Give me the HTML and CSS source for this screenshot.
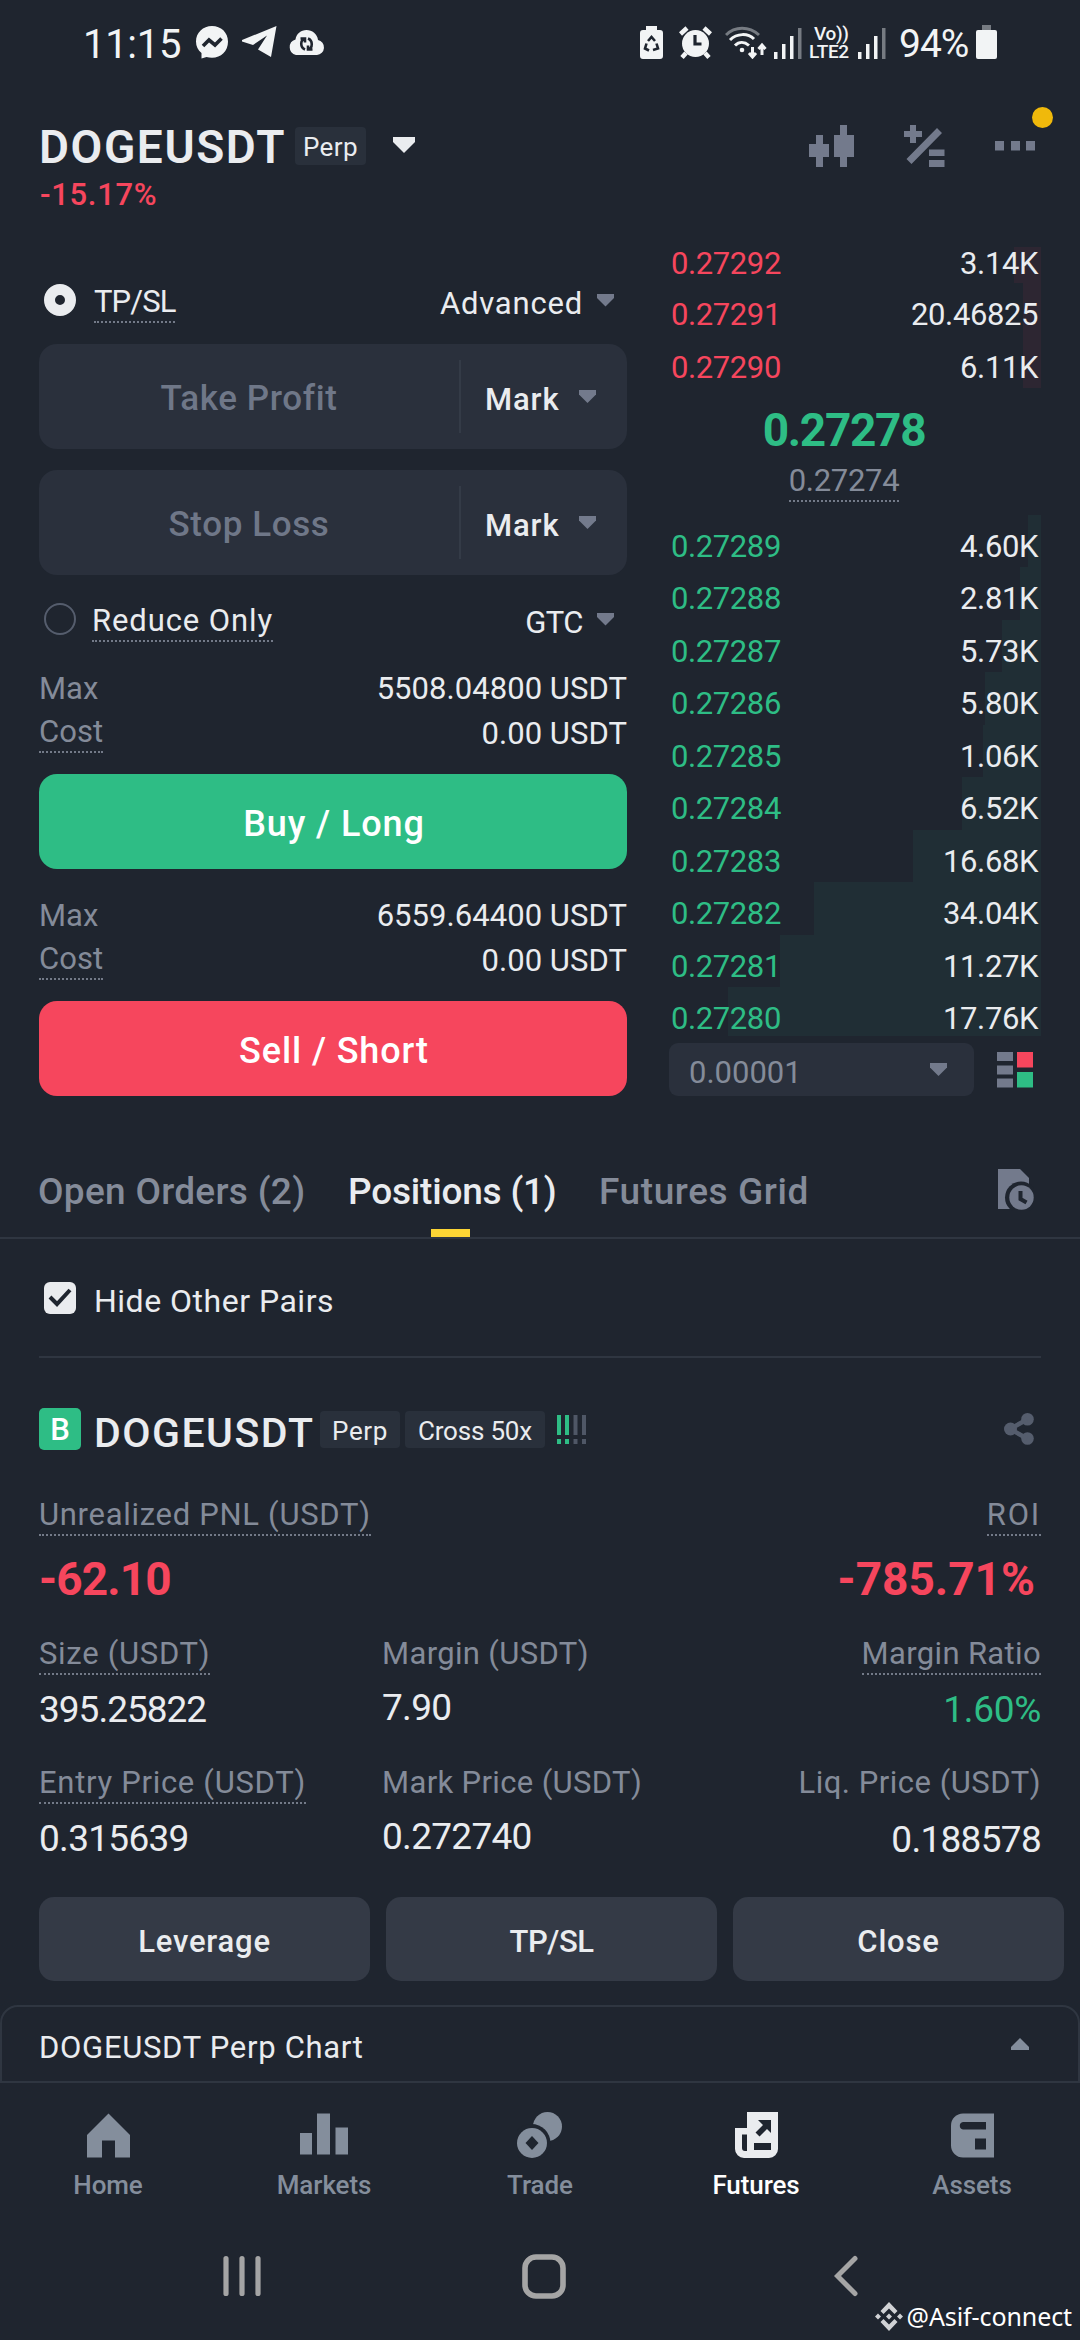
FILE: index.html
```html
<!DOCTYPE html>
<html lang="en">
<head>
    <meta charset="UTF-8">
    <meta name="viewport" content="width=device-width, initial-scale=1.0">
    <title>DOGEUSDT Perp</title>
    <link rel="stylesheet" href="styles.css">
</head>
<body>
    <div class="screen">
        <div class="status-bar">
            <div class="status-left">
                <span class="clock">11:15</span>
                <svg class="ic-messenger" width="32" height="33" viewBox="0 0 32 33">
                    <path fill="#f2f4f5" d="M16 0C7 0 0 6.600 0 15.500c0 4.700 2 8.700 5.500 11.500v5.500l5-1.500c1.700.500 3.500.700 5.500.700 9 0 16-6.700 16-16S25 0 16 0z"/>
                    <path fill="none" stroke="#1f252f" stroke-width="3.600" d="M7 20l6-6 6 5 6.500-6.500"/>
                </svg>
                <svg class="ic-telegram" width="35" height="32" viewBox="0 0 35 32">
                    <path fill="#f2f4f5" d="M34.500 0L29 31 16 23.500 25 9.500 11 19 0 15.500V14z"/>
                </svg>
                <svg class="ic-cloud" width="37" height="25" viewBox="0 0 37 25">
                    <path fill="#f2f4f5" d="M8 25a8 8 0 0 1-.500-15.500C8 4 13 0 18.500 0S29.500 4 30 10a7.600 7.600 0 0 1-1 15z"/>
                    <path fill="none" stroke="#1f252f" stroke-width="2.600" d="M17 8.500c-5 1.500-5 9 0 11M20 8.500c5 2 5 9.500 0 11M12.500 8.500h4.500v4M24.500 19.500H20v-4"/>
                </svg>
            </div>
            <div class="status-right">
                <svg width="23" height="33" viewBox="0 0 23 33">
                    <path fill="#f2f4f5" d="M6 0h11v4h3a3 3 0 0 1 3 3v23a3 3 0 0 1-3 3H3a3 3 0 0 1-3-3V7a3 3 0 0 1 3-3h3z"/>
                    <path fill="none" stroke="#1f252f" stroke-width="2.600" d="M8 15l3.500-4 3.500 4M6.500 17.500L5 22.500l4 2M16.500 17.500l1.500 5-5 1.500"/>
                </svg>
                <svg class="ic-alarm" width="33" height="33" viewBox="0 0 33 33">
                    <g stroke="#f2f4f5" stroke-width="4.500"><path d="M1.500 8L8 2M31.500 8L25 2M7 27l-4 4.500M26 27l4 4.500"/></g>
                    <circle cx="16.500" cy="17.500" r="13.500" fill="#f2f4f5"/>
                    <path fill="none" stroke="#1f252f" stroke-width="3.200" d="M16 9v9h6.500"/>
                </svg>
                <svg class="ic-wifi" width="42" height="33" viewBox="0 0 42 33">
                    <g fill="none" stroke="#f2f4f5" stroke-width="3">
                        <path stroke="#767b82" d="M1 9C10 0 24 0 34 9"/>
                        <path d="M5 14C12 7 23 7 29 13"/>
                        <path d="M10 19.500c4-4 9.500-4 14 0"/>
                        <path d="M27.500 21v9M24 27l3.500 4 3.500-4M37 29v-9M33.500 23l3.500-4 3.500 4"/>
                    </g>
                    <circle cx="17" cy="24" r="2.300" fill="#f2f4f5"/>
                </svg>
                <svg class="ic-signal" width="28" height="31" viewBox="0 0 28 31">
                    <path fill="#f2f4f5" d="M0 24h3.500v7H0zM8 16h3.500v15H8zM16 8h3.500v23H16z"/>
                    <path fill="#767b82" d="M24 0h3.500v31H24z"/>
                </svg>
                <span class="volte"><span class="vo">Vo))</span><span>LTE2</span></span>
                <svg class="ic-signal2" width="28" height="31" viewBox="0 0 28 31">
                    <path fill="#f2f4f5" d="M0 24h3.500v7H0zM8 16h3.500v15H8zM16 8h3.500v23H16z"/>
                    <path fill="#767b82" d="M24 0h3.500v31H24z"/>
                </svg>
                <span class="battery-text">94%</span>
                <svg width="21" height="34" viewBox="0 0 21 34">
                    <path fill="#767b82" d="M6 0h9v6H6z"/>
                    <rect y="5" width="21" height="29" rx="2" fill="#f2f4f5"/>
                </svg>
            </div>
        </div>

        <div class="header">
            <div class="header-row">
                <h1 class="pair">DOGEUSDT</h1>
                <span class="tag tag-head">Perp</span>
                <svg class="caret-head" width="22" height="16" viewBox="0 0 22 16"><path fill="#eaecef" d="M0 0h22v5L11 16 0 5z"/></svg>
                <div class="header-icons">
                    <svg width="45" height="42" viewBox="0 0 45 42"><path fill="#737a8c" d="M7 10h7v9h6v13h-6v10H7V32H0V19h7zM31 0h7v10h7v22h-7v10h-7V32h-6V10h6z"/></svg>
                    <svg width="41" height="42" viewBox="0 0 41 42"><path fill="#737a8c" d="M6 0h6v6h6v6h-6v6H6v-6H0V6h6zM33 3l5 5L7.500 39l-5-5zM25 24.500h15.500V31H25zM25 35h15.500v7H25z"/></svg>
                    <svg width="41" height="10" viewBox="0 0 41 10"><path fill="#737a8c" d="M0 0h9v9.500H0zM16 0h9v9.500h-9zM31 0h9v9.500h-9z"/></svg>
                    <span class="dot"></span>
                </div>
            </div>
            <div class="change">-15.17%</div>
        </div>

        <div class="trade">
            <div class="order-form">
                <div class="option-row">
                    <span class="radio radio-on"></span>
                    <span class="dotted tight">TP/SL</span>
                    <span class="select">Advanced</span>
                    <span class="caret"></span>
                </div>
                <div class="field">
                    <span class="placeholder">Take Profit</span>
                    <span class="field-type">Mark <i class="caret"></i></span>
                </div>
                <div class="field">
                    <span class="placeholder">Stop Loss</span>
                    <span class="field-type">Mark <i class="caret"></i></span>
                </div>
                <div class="option-row option-reduce">
                    <span class="radio"></span>
                    <span class="dotted wide">Reduce Only</span>
                    <span class="select gtc">GTC</span>
                    <span class="caret"></span>
                </div>
                <div class="side">
                    <div class="max-row"><span class="muted">Max</span><span>5508.04800 USDT</span></div>
                    <div class="cost-row"><span class="muted dotted">Cost</span><span>0.00 USDT</span></div>
                    <button class="btn btn-buy">Buy / Long</button>
                </div>
                <div class="side side-sell">
                    <div class="max-row"><span class="muted">Max</span><span>6559.64400 USDT</span></div>
                    <div class="cost-row"><span class="muted dotted">Cost</span><span>0.00 USDT</span></div>
                    <button class="btn btn-sell">Sell / Short</button>
                </div>
            </div>

            <div class="book">
                <div class="asks">
                    <div class="level"><i class="depth" style="width: 27px;"></i><span>0.27292</span><b>3.14K</b></div>
                    <div class="level"><i class="depth" style="width: 18px;"></i><span>0.27291</span><b>20.46825</b></div>
                    <div class="level"><i class="depth" style="width: 18px;"></i><span>0.27290</span><b>6.11K</b></div>
                </div>
                <div class="last-price">0.27278</div>
                <div class="mark-price"><span class="dotted">0.27274</span></div>
                <div class="bids">
                    <div class="level"><i class="depth" style="width: 13px;"></i><span>0.27289</span><b>4.60K</b></div>
                    <div class="level"><i class="depth" style="width: 21px;"></i><span>0.27288</span><b>2.81K</b></div>
                    <div class="level"><i class="depth" style="width: 39px;"></i><span>0.27287</span><b>5.73K</b></div>
                    <div class="level"><i class="depth" style="width: 56px;"></i><span>0.27286</span><b>5.80K</b></div>
                    <div class="level"><i class="depth" style="width: 58px;"></i><span>0.27285</span><b>1.06K</b></div>
                    <div class="level"><i class="depth" style="width: 79px;"></i><span>0.27284</span><b>6.52K</b></div>
                    <div class="level"><i class="depth" style="width: 128px;"></i><span>0.27283</span><b>16.68K</b></div>
                    <div class="level"><i class="depth" style="width: 227px;"></i><span>0.27282</span><b>34.04K</b></div>
                    <div class="level"><i class="depth" style="width: 261px;"></i><span>0.27281</span><b>11.27K</b></div>
                    <div class="level"><i class="depth" style="width: 313px;"></i><span>0.27280</span><b>17.76K</b></div>
                </div>
                <div class="book-footer">
                    <div class="step">0.00001 <i class="caret"></i></div>
                    <svg width="37" height="36" viewBox="0 0 37 36">
                        <path fill="#737a8c" d="M0 0h16v9H0zM0 13.500h16v9H0zM0 26.500h16v9H0z"/>
                        <path fill="#f6465d" d="M20 0h16v15.500H20z"/>
                        <path fill="#2ebd85" d="M20 20h16v15.500H20z"/>
                    </svg>
                </div>
            </div>
        </div>

        <div class="tabs">
            <span class="tab">Open Orders (2)</span>
            <span class="tab tab-active">Positions (1)</span>
            <span class="tab tab-grid">Futures Grid</span>
            <svg class="history" width="36" height="42" viewBox="0 0 36 42">
                <path fill="#737a8c" d="M0 0h22l9 9v31H0z"/>
                <circle cx="23" cy="28.500" r="16" fill="#1f252f"/>
                <circle cx="23.500" cy="28.500" r="12.200" fill="#737a8c"/>
                <path fill="none" stroke="#1f252f" stroke-width="4" d="M22.500 22v8l6 3.500"/>
            </svg>
        </div>

        <div class="hide-pairs">
            <svg width="32" height="32" viewBox="0 0 32 32">
                <rect width="32" height="32" rx="6" fill="#eaecef"/>
                <path fill="none" stroke="#1f252f" stroke-width="4" d="M6 15l7 7L26 8"/>
            </svg>
            <span>Hide Other Pairs</span>
        </div>

        <div class="position">
            <div class="position-head">
                <span class="side-badge">B</span>
                <span class="position-pair">DOGEUSDT</span>
                <span class="tag tag-perp">Perp</span>
                <span class="tag tag-cross">Cross 50x</span>
                <svg class="adl" width="29" height="29" viewBox="0 0 29 29">
                    <path fill="#2ebd85" d="M0 0h4v20H0zM0 24h4v5H0zM8 0h4v20H8zM8 24h4v5H8z"/>
                    <path fill="#4f5766" d="M16.500 0h4v20h-4zM16.500 24h4v5h-4zM25 0h4v20h-4zM25 24h4v5h-4z"/>
                </svg>
                <svg class="share" width="30" height="32" viewBox="0 0 30 32">
                    <g fill="#555d6d"><circle cx="6.500" cy="16" r="6.500"/><circle cx="23.500" cy="6.300" r="6.300"/><circle cx="23.500" cy="25.500" r="6.300"/></g>
                    <path fill="none" stroke="#555d6d" stroke-width="4.500" d="M23 6.500L6 16l17 9.500"/>
                </svg>
            </div>

            <div class="pnl">
                <div class="stat"><span class="label dotted">Unrealized PNL (USDT)</span><span class="pnl-value">-62.10</span></div>
                <div class="stat right"><span class="label dotted roi">ROI</span><span class="pnl-value roi-value">-785.71%</span></div>
            </div>
            <div class="stats">
                <div class="stat"><span class="label dotted">Size (USDT)</span><span class="value value-size">395.25822</span></div>
                <div class="stat"><span class="label label-mid">Margin (USDT)</span><span class="value">7.90</span></div>
                <div class="stat right"><span class="label label-mid dotted">Margin Ratio</span><span class="value green">1.60%</span></div>
            </div>
            <div class="stats stats-price">
                <div class="stat"><span class="label dotted">Entry Price (USDT)</span><span class="value">0.315639</span></div>
                <div class="stat"><span class="label label-mid">Mark Price (USDT)</span><span class="value">0.272740</span></div>
                <div class="stat right"><span class="label label-liq">Liq. Price (USDT)</span><span class="value value-liq">0.188578</span></div>
            </div>

            <div class="actions">
                <button class="action">Leverage</button>
                <button class="action tight">TP/SL</button>
                <button class="action">Close</button>
            </div>
        </div>

        <div class="chart-panel">
            <span>DOGEUSDT Perp Chart</span>
            <svg width="18" height="12" viewBox="0 0 18 12"><path fill="#848e9c" d="M9 0l9 9v3H0V9z"/></svg>
        </div>

        <div class="nav">
            <div class="nav-item">
                <svg width="43" height="45" viewBox="0 0 43 45"><path fill="#848e9c" d="M21.500 1L43 22.500V45H28V28H15v17H0V22.500z"/></svg>
                <span>Home</span>
            </div>
            <div class="nav-item">
                <svg width="48" height="45" viewBox="0 0 48 45"><path fill="#848e9c" d="M0 20.500h12V42H0zM17 1h13v41H17zM35.500 15H48v27H35.500z"/></svg>
                <span>Markets</span>
            </div>
            <div class="nav-item">
                <svg width="46" height="46" viewBox="0 0 46 46">
                    <circle cx="30.500" cy="14.500" r="14.500" fill="#848e9c"/>
                    <circle cx="14.500" cy="31" r="19" fill="#1f252f"/>
                    <circle cx="15" cy="31" r="15" fill="#848e9c"/>
                    <path fill="#1f252f" d="M15 24l6.500 7-6.500 7-6.500-7z"/>
                </svg>
                <span>Trade</span>
            </div>
            <div class="nav-item nav-active">
                <svg width="43" height="46" viewBox="0 0 43 46">
                    <path fill="#eaecef" d="M12 0h31v37a9 9 0 0 1-9 9H9a9 9 0 0 1-9-9V16h12z"/>
                    <path fill="#1f252f" d="M7 22.500h5V39H10a3 3 0 0 1-3-3zM19 31h17v7H19zM23 8h13v13l-4-4-7.500 7.500-4-4L28 13z"/>
                </svg>
                <span>Futures</span>
            </div>
            <div class="nav-item">
                <svg width="43" height="45" viewBox="0 0 43 45">
                    <path fill="#848e9c" d="M12 1h31v44H12A12 12 0 0 1 0 33V13A12 12 0 0 1 12 1z"/>
                    <path fill="#1f252f" d="M12 9.500h23V17H12a3.800 3.800 0 0 1 0-7.500zM24 26h11v11H24z"/>
                </svg>
                <span>Assets</span>
            </div>
        </div>

        <div class="system-nav">
            <svg class="recents" width="38" height="42" viewBox="0 0 38 42"><path stroke="#a5a5a5" stroke-width="5.200" stroke-linecap="round" d="M3 3.500v35M19 3.500v35M35 3.500v35"/></svg>
            <svg class="home-key" width="44" height="45" viewBox="0 0 44 45"><rect x="3" y="3" width="38" height="39" rx="11" fill="none" stroke="#a5a5a5" stroke-width="5.600"/></svg>
            <svg class="back" width="24" height="42" viewBox="0 0 24 42"><path fill="none" stroke="#a5a5a5" stroke-width="5" stroke-linecap="round" d="M21 3.500L3.500 21 21 38.500"/></svg>
        </div>

        <div class="watermark">
            <svg width="28" height="29" viewBox="0 0 28 29">
                <path fill="#d0d2d5" d="M14 0l8.500 9-3 3L14 6.500 8.500 12l-3-3zM5.500 20l3-3 5.500 5.500 5.500-5.500 3 3-8.500 9zM14 11.500l3 3-3 3-3-3zM3 11.500l3 3-3 3-3-3zM25 11.500l3 3-3 3-3-3z"/>
            </svg>
            <span>@Asif-connect</span>
        </div>
    </div>
</body>
</html>
```
FILE: styles.css
```css
* {
    margin: 0;
    padding: 0;
    box-sizing: border-box;
}
body {
    background-color: #1f252f;
    font-family: Roboto, "Noto Sans", sans-serif;
    font-size: 31px;
    color: #eaecef;
}
svg {
    display: block;
    flex: none;
}
button {
    border: none;
    font-family: inherit;
    color: inherit;
}
.screen {
    position: relative;
    width: 1080px;
    height: 2340px;
    overflow: hidden;
    white-space: nowrap;
}

/* status bar */
.status-bar {
    display: flex;
    justify-content: space-between;
    height: 86px;
    padding: 0 83px 2px 83px;
    color: #f2f4f5;
}
.status-left,
.status-right {
    display: flex;
    align-items: center;
}
.clock {
    width: 113px;
    font-size: 40px;
    letter-spacing: -0.3px;
    padding-top: 4px;
}
.ic-telegram {
    margin-left: 14px;
}
.ic-cloud {
    margin-left: 11px;
}
.ic-alarm {
    margin-left: 16px;
}
.ic-wifi {
    margin-left: 13px;
}
.ic-signal {
    margin: 2px 0 0 7px;
}
.ic-signal2 {
    margin: 2px 0 0 6px;
}
.volte {
    display: flex;
    flex-direction: column;
    width: 43px;
    margin-left: 7px;
    padding-top: 2px;
    font-size: 19px;
    font-weight: 500;
    line-height: 18px;
    letter-spacing: -0.3px;
}
.vo {
    padding-left: 5px;
}
.battery-text {
    width: 77px;
    margin-left: 13px;
    padding-top: 4px;
    font-size: 39px;
    letter-spacing: -1px;
}

/* header */
.header {
    height: 126px;
    padding: 31px 39px 0;
}
.header-row {
    display: flex;
    align-items: center;
    height: 60px;
}
.pair {
    width: 256px;
    font-size: 46px;
    font-weight: 600;
    letter-spacing: 1.6px;
}
.tag {
    height: 37px;
    line-height: 41px;
    border-radius: 4px;
    background-color: #29303b;
    font-size: 26px;
    text-align: center;
}
.tag-head {
    width: 71px;
    height: 38px;
    margin-bottom: 2px;
    letter-spacing: 0.4px;
}
.caret-head {
    margin-left: 27px;
    margin-bottom: 4px;
}
.header-icons {
    position: relative;
    display: flex;
    flex: 1;
    align-items: center;
    justify-content: flex-end;
    gap: 50px;
    padding-right: 5px;
    padding-bottom: 3px;
}
.dot {
    position: absolute;
    top: -18px;
    right: -12px;
    width: 21px;
    height: 21px;
    border-radius: 50%;
    background-color: #f0b90b;
}
.change {
    line-height: 35px;
    padding-left: 1px;
    font-weight: 500;
    letter-spacing: 0.7px;
    color: #f6465d;
}

/* order form */
.trade {
    display: flex;
    justify-content: space-between;
    height: 884px;
    padding: 0 39px;
}
.order-form {
    width: 588px;
    padding-top: 67px;
}
.option-row {
    display: flex;
    align-items: center;
    height: 46px;
    padding: 1px 13px 0 0;
}
.option-reduce {
    margin-top: 23px;
}
.radio {
    width: 32px;
    height: 32px;
    margin: 0 18px 5px 5px;
    border: 2px solid #555d6d;
    border-radius: 50%;
}
.option-reduce .radio {
    margin-right: 16px;
}
.radio-on {
    border: 11px solid #eaecef;
}
.dotted {
    line-height: 38px;
    border-bottom: 2px dotted #737a88;
}
.tight {
    letter-spacing: -0.9px;
}
.wide {
    letter-spacing: 0.9px;
}
.select {
    margin: 0 14px 0 auto;
    padding-top: 1px;
    letter-spacing: 0.8px;
}
.gtc {
    letter-spacing: -0.5px;
}
.caret {
    width: 17px;
    height: 13px;
    margin-bottom: 5px;
    background-color: #737a8c;
    clip-path: polygon(0 0, 100% 0, 100% 35%, 50% 100%, 0 35%);
}
.field {
    display: flex;
    align-items: center;
    height: 105px;
    margin-top: 21px;
    border-radius: 18px;
    background-color: #2a303c;
}
.option-row + .field {
    margin-top: 19px;
}
.placeholder {
    width: 420px;
    padding-top: 3px;
    text-align: center;
    font-size: 35px;
    font-weight: 500;
    letter-spacing: 0.6px;
    color: #6f7788;
}
.field-type {
    display: flex;
    flex: 1;
    align-items: center;
    justify-content: space-between;
    height: 73px;
    padding: 5px 31px 0 24px;
    border-left: 2px solid #343b47;
    font-weight: 500;
    letter-spacing: 0.9px;
}
.side {
    padding-top: 26px;
}
.side-sell {
    padding-top: 28px;
}
.max-row,
.cost-row {
    display: flex;
    justify-content: space-between;
    align-items: center;
    height: 37px;
    letter-spacing: 0.05px;
}
.cost-row {
    height: 44px;
    margin: 4px 0 19px;
}
.muted {
    color: #848b99;
}
.btn {
    display: block;
    width: 100%;
    height: 95px;
    padding: 4px 0 0 2px;
    border-radius: 18px;
    font-size: 36px;
    font-weight: 500;
    letter-spacing: 0.9px;
    color: #fff;
}
.btn-buy {
    background-color: #2ebd85;
}
.btn-sell {
    background-color: #f6465d;
}

/* order book */
.book {
    width: 372px;
    padding-top: 35px;
}
.asks {
    height: 141px;
    color: #f6465d;
}
.bids {
    height: 521.5px;
    margin-top: 12.5px;
    color: #2ebd85;
}
.level {
    position: relative;
    display: flex;
    justify-content: space-between;
    height: 52.5px;
    padding: 15px 3px 0 2px;
    line-height: 34px;
    letter-spacing: -0.4px;
}
/* first ask and last bid are shorter than a full level */
.asks .level:first-child {
    height: 36px;
    padding-top: 0;
}
.bids .level:last-child {
    height: 49px;
}
.level b {
    position: relative;
    font-weight: 400;
    color: #eaecef;
}
.level span {
    position: relative;
}
.depth {
    position: absolute;
    top: 0;
    right: 0;
    bottom: 0;
    background-color: #202e35;
}
.asks .depth {
    background-color: #2d2632;
}
.last-price {
    margin-top: 12px;
    padding-right: 22px;
    line-height: 60px;
    text-align: center;
    font-size: 46px;
    font-weight: 700;
    letter-spacing: -1.3px;
    color: #2ebd85;
}
.mark-price {
    display: flex;
    justify-content: center;
    margin-top: 2px;
    padding-right: 22px;
    letter-spacing: -0.3px;
    color: #848b99;
}
.book-footer {
    display: flex;
    align-items: center;
    justify-content: space-between;
    height: 53px;
    margin-top: 7px;
    padding-right: 7px;
}
.step {
    display: flex;
    align-items: center;
    justify-content: space-between;
    width: 305px;
    height: 53px;
    padding: 5px 27px 0 20px;
    border-radius: 9px;
    background-color: #2a303c;
    letter-spacing: 0;
    color: #848b99;
}

/* tabs */
.tabs {
    display: flex;
    height: 95px;
    margin-top: 48px;
    padding: 0 46px 0 38px;
    border-bottom: 2px solid #2f3641;
    line-height: 95px;
    font-size: 37px;
    font-weight: 500;
}
.tab {
    width: 310px;
    letter-spacing: 0.3px;
    color: #848b99;
}
.tab-active {
    position: relative;
    width: 251px;
    letter-spacing: -0.2px;
    color: #eaecef;
}
.tab-active::after {
    content: "";
    position: absolute;
    left: 83px;
    bottom: 0;
    width: 39px;
    height: 8px;
    background-color: #fcd535;
}
.tab-grid {
    width: auto;
    letter-spacing: 0.6px;
}
.history {
    margin: 25px 0 0 auto;
}
.hide-pairs {
    display: flex;
    align-items: center;
    gap: 18px;
    height: 119px;
    margin: 0 39px;
    padding-left: 5px;
    border-bottom: 2px solid #2f3641;
    font-size: 32px;
    letter-spacing: 0.5px;
}
.hide-pairs span {
    padding-top: 6px;
}

/* position card */
.position {
    padding: 50px 39px 0;
}
.position-head {
    display: flex;
    align-items: center;
    height: 42px;
}
.side-badge {
    width: 42px;
    height: 42px;
    line-height: 44px;
    border-radius: 5px;
    background-color: #2ebd85;
    text-align: center;
    font-size: 31px;
    font-weight: 500;
    color: #fff;
}
.position-pair {
    width: 239px;
    padding: 8px 0 0 13px;
    font-size: 41px;
    font-weight: 500;
    letter-spacing: 1.5px;
}
.tag-perp {
    width: 80px;
    letter-spacing: 0.6px;
}
.tag-cross {
    width: 140px;
    margin-left: 5px;
    letter-spacing: -0.2px;
}
.adl {
    margin-left: 12px;
}
.share {
    margin-left: auto;
    margin-right: 7px;
}
.pnl {
    display: flex;
    justify-content: space-between;
    margin-top: 46px;
}
.stats {
    display: grid;
    grid-template-columns: 343px 300px 1fr;
    margin-top: 29px;
}
.stats-price {
    margin-top: 34px;
}
.stat {
    display: flex;
    flex-direction: column;
    align-items: flex-start;
}
.right {
    align-items: flex-end;
}
.label {
    line-height: 38px;
    letter-spacing: 0.7px;
    color: #848b99;
}
.label-mid {
    letter-spacing: 0.35px;
}
.label-liq {
    letter-spacing: 0.5px;
}
.roi {
    letter-spacing: 1.8px;
}
.pnl-value {
    margin-top: 16px;
    line-height: 54px;
    font-size: 46px;
    font-weight: 700;
    letter-spacing: -0.9px;
    color: #f6465d;
}
.roi-value {
    margin-right: 6px;
    letter-spacing: 0;
}
.value {
    margin-top: 15px;
    line-height: 40px;
    font-size: 37px;
    letter-spacing: -0.7px;
}
.value-size {
    letter-spacing: -1px;
}
.value-liq {
    margin-top: 18px;
}
.green {
    letter-spacing: -0.3px;
    color: #2ebd85;
}
.actions {
    display: flex;
    gap: 16px;
    width: 1025px;
    margin-top: 37px;
}
.action {
    flex: 1;
    height: 84px;
    padding-top: 5px;
    border-radius: 15px;
    background-color: #343a46;
    font-size: 31px;
    font-weight: 500;
    letter-spacing: 0.8px;
}
.action.tight {
    letter-spacing: -0.5px;
}

/* chart drawer */
.chart-panel {
    display: flex;
    align-items: center;
    justify-content: space-between;
    height: 78px;
    margin-top: 24px;
    padding: 6px 49px 0 37px;
    border: 2px solid #2f3641;
    border-radius: 18px 18px 0 0;
    letter-spacing: 0.7px;
}
.chart-panel svg {
    margin-bottom: 6px;
}

/* bottom navigation */
.nav {
    display: flex;
    height: 140px;
    padding-top: 29px;
}
.nav-item {
    display: flex;
    flex-direction: column;
    align-items: center;
    width: 216px;
    font-size: 26px;
    font-weight: 500;
    color: #848e9c;
}
.nav-item svg {
    height: 46px;
}
.nav-item span {
    margin-top: 11px;
    line-height: 32px;
    letter-spacing: -0.1px;
}
.nav-active {
    color: #fff;
}
.system-nav {
    display: flex;
    align-items: center;
    height: 106px;
}
.recents {
    margin-left: 223px;
}
.home-key {
    margin-left: 261px;
}
.back {
    margin-left: 268px;
}
.watermark {
    position: absolute;
    right: 8px;
    bottom: 7px;
    display: flex;
    align-items: center;
    gap: 4px;
    height: 34px;
    font-family: "Noto Sans", sans-serif;
    font-size: 25px;
    letter-spacing: -0.1px;
    color: #fff;
}
```
